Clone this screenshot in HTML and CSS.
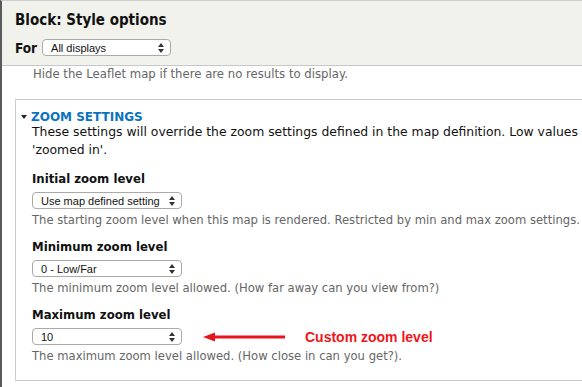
FILE: index.html
```html
<!DOCTYPE html>
<html>
<head>
<meta charset="utf-8">
<link rel="stylesheet" href="styles.css">
</head>
<body>
<div class="dialog">
  <div class="header">
    <h1 class="title">Block: Style options</h1>
    <div class="for-row">
      <span class="for-label">For</span>
      <div class="select select-for"><span>All displays</span><span class="arrows"><svg width="6" height="10" viewBox="0 0 6 10"><path d="M0 4 L3 0 L6 4 Z M0 6 L3 10 L6 6 Z" fill="#333"/></svg></span></div>
    </div>
  </div>
  <div class="content">
    <div class="hide-desc">Hide the Leaflet map if there are no results to display.</div>
    <div class="fieldset">
      <div class="legend"><span class="tri"></span><span class="legend-text">ZOOM SETTINGS</span></div>
      <div class="fs-body">
        <div class="fs-desc">These settings will override the zoom settings defined in the map definition. Low values are 'zoomed out', high values are<br>'zoomed in'.</div>
        <div class="item first">
          <div class="label">Initial zoom level</div>
          <div class="select"><span>Use map defined setting</span><span class="arrows"><svg width="6" height="10" viewBox="0 0 6 10"><path d="M0 4 L3 0 L6 4 Z M0 6 L3 10 L6 6 Z" fill="#333"/></svg></span></div>
          <div class="desc">The starting zoom level when this map is rendered. Restricted by min and max zoom settings.</div>
        </div>
        <div class="item">
          <div class="label">Minimum zoom level</div>
          <div class="select"><span>0 - Low/Far</span><span class="arrows"><svg width="6" height="10" viewBox="0 0 6 10"><path d="M0 4 L3 0 L6 4 Z M0 6 L3 10 L6 6 Z" fill="#333"/></svg></span></div>
          <div class="desc">The minimum zoom level allowed. (How far away can you view from?)</div>
        </div>
        <div class="item">
          <div class="label">Maximum zoom level</div>
          <div class="select-row">
            <div class="select"><span>10</span><span class="arrows"><svg width="6" height="10" viewBox="0 0 6 10"><path d="M0 4 L3 0 L6 4 Z M0 6 L3 10 L6 6 Z" fill="#333"/></svg></span></div>
            <svg class="arrow" width="82" height="10" viewBox="0 0 82 10"><path d="M0 5 L12 0.5 L12 3.5 L82 3.5 L82 6.5 L12 6.5 L12 9.5 Z" fill="#e8141b"/></svg>
            <span class="callout">Custom zoom level</span>
          </div>
          <div class="desc">The maximum zoom level allowed. (How close in can you get?).</div>
        </div>
      </div>
    </div>
  </div>
</div>
</body>
</html>
```
FILE: styles.css
```css
html, body {
  margin: 0;
  padding: 0;
  background: #fff;
  width: 582px;
  height: 387px;
  overflow: hidden;
}
.dialog {
  width: 580px;
  height: 386px;
  border-left: 2px solid #5a5a5a;
  border-top: 1px solid #cfcfcf;
  font-family: "DejaVu Sans", Verdana, sans-serif;
  overflow: hidden;
}
.header {
  background: #f2f2ec;
  border-bottom: 1px solid #c8c8c8;
  height: 64px;
  padding: 0 0 0 13px;
}
.title {
  margin: 0;
  padding-top: 9px;
  font-family: "DejaVu Sans Condensed", "DejaVu Sans", sans-serif;
  font-size: 15px;
  font-weight: bold;
  color: #111;
  line-height: 20px;
  height: 20px;
}
.for-row {
  display: flex;
  align-items: center;
  margin-top: 9px;
  gap: 5px;
}
.for-label {
  font-family: "DejaVu Sans Condensed", "DejaVu Sans", sans-serif;
  font-size: 13.5px;
  font-weight: bold;
  color: #111;
}
.select {
  box-sizing: border-box;
  width: 150px;
  height: 17px;
  border: 1px solid #aaa;
  border-radius: 4px;
  background: #fff;
  display: flex;
  align-items: center;
  justify-content: space-between;
  padding: 0 6px 0 8px;
  font-family: "Liberation Sans", Arial, sans-serif;
  font-size: 11px;
  color: #111;
}
.select-for {
  width: 129px;
}
.arrows {
  display: flex;
}
.content {
  padding: 0 0 0 13px;
}
.hide-desc {
  font-size: 11.7px;
  color: #666;
  padding-left: 18px;
  line-height: 14px;
  margin-top: 1px;
}
.fieldset {
  margin-top: 18px;
  border: 1px solid #ccc;
  border-right: none;
  height: 282px;
  box-sizing: border-box;
  padding: 10px 0 0 5px;
}
.legend {
  display: flex;
  align-items: center;
  height: 14px;
}
.tri {
  width: 0;
  height: 0;
  border-left: 3px solid transparent;
  border-right: 3px solid transparent;
  border-top: 4px solid #222;
  margin-right: 4px;
}
.legend-text {
  color: #0a73bf;
  font-weight: bold;
  font-size: 12px;
}
.fs-body {
  padding-left: 11px;
}
.fs-desc {
  font-size: 12.4px;
  color: #111;
  line-height: 18px;
  white-space: nowrap;
  margin-top: -1px;
}
.item {
  margin-top: 11px;
}
.item.first {
  margin-top: 12px;
}
.label {
  font-family: "DejaVu Sans Condensed", "DejaVu Sans", sans-serif;
  font-size: 13px;
  font-weight: bold;
  color: #111;
  line-height: 16px;
  margin-bottom: 5px;
}
.desc {
  font-size: 11.6px;
  color: #666;
  line-height: 16px;
  margin-top: 3px;
  white-space: nowrap;
}
.select-row {
  display: flex;
  align-items: center;
}
.arrow {
  margin-left: 21px;
}
.callout {
  margin-left: 20px;
  font-family: "Liberation Sans", Arial, sans-serif;
  font-weight: bold;
  font-size: 14px;
  color: #f0141b;
}
```
